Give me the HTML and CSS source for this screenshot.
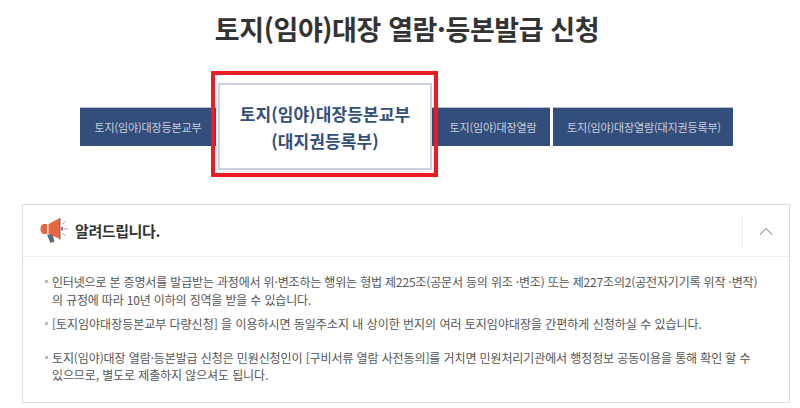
FILE: index.html
```html
<!DOCTYPE html>
<html lang="ko">
<head>
    <meta charset="UTF-8">
    <title>토지(임야)대장 열람·등본발급 신청</title>
    <link rel="stylesheet" href="styles.css">
</head>
<body>
    <h1 class="page-title">토지(임야)대장 열람·등본발급 신청</h1>

    <div class="tabs">
        <div class="tab tab-first">토지(임야)대장등본교부</div>
        <div class="tab tab-active">
            토지(임야)대장등본교부<br>(대지권등록부)
            <div class="tab-mark"></div>
        </div>
        <div class="tab tab-third">토지(임야)대장열람</div>
        <div class="tab tab-fourth">토지(임야)대장열람(대지권등록부)</div>
    </div>

    <div class="notice">
        <div class="notice-head">
            <svg class="notice-icon" width="28" height="26" viewBox="0 0 28 26">
                <path d="M4 6h3v10H4C2 16 .5 14 .5 11S2 6 4 6z" fill="#e8663f"/>
                <path d="M8.500 6L19 .5V20.500L8.500 16z" fill="#e8663f"/>
                <path d="M19 0h1.500v21.500H19z" fill="#6b7887"/>
                <path d="M7 16.500h5.500l2 7-4 1.500z" fill="#59687a"/>
                <path d="M21 9h2v3.500h-2z" fill="#d9534f"/>
                <path d="M24 10.800h4M22.500 6l3-2.500M22.500 15.500l3 2.500" stroke="#b9c0c8" stroke-width="1.200" fill="none"/>
            </svg>
            <div class="notice-title">알려드립니다.</div>
            <div class="notice-toggle">
                <svg width="14" height="8" viewBox="0 0 14 8"><path d="M1 7.500L7 1.500l6 6" stroke="#9aa7b5" stroke-width="1.200" fill="none"/></svg>
            </div>
        </div>
        <ul class="notice-list">
            <li>인터넷으로 본 증명서를 발급받는 과정에서 위·변조하는 행위는 형법 제225조(공문서 등의 위조 ·변조) 또는 제227조의2(공전자기기록 위작 ·변작)<br>의 규정에 따라 10년 이하의 징역을 받을 수 있습니다.</li>
            <li class="item-wide">[토지임야대장등본교부 다량신청] 을 이용하시면 동일주소지 내 상이한 번지의 여러 토지임야대장을 간편하게 신청하실 수 있습니다.</li>
            <li class="item-gap">토지(임야)대장 열람·등본발급 신청은 민원신청인이 [구비서류 열람 사전동의]를 거치면 민원처리기관에서 행정정보 공동이용을 통해 확인 할 수<br>있으므로, 별도로 제출하지 않으셔도 됩니다.</li>
        </ul>
    </div>
</body>
</html>
```

FILE: styles.css
```css
* { margin: 0; padding: 0; box-sizing: border-box; }
body {
    font-family: "Noto Sans CJK KR", "Noto Sans", sans-serif;
    background: white;
    color: #555;
    width: 800px;
    height: 408px;
    overflow: hidden;
}
.page-title {
    font-size: 27px;
    font-weight: bold;
    color: #333;
    text-align: center;
    line-height: 38px;
    padding-top: 10px;
    padding-left: 14px;
    letter-spacing: -0.4px;
}
.tabs {
    display: flex;
    align-items: center;
    height: 87px;
    margin-top: 35px;
    padding-left: 80px;
}
.tab {
    height: 39px;
    background: #344e7c;
    border-top: 1px solid #b5bfd0;
    color: #c9d0dc;
    font-size: 11px;
    display: flex;
    align-items: center;
    justify-content: center;
    letter-spacing: -0.15px;
}
.tab-first { width: 136px; margin-right: 2px; }
.tab-third { width: 118px; padding-left: 4px; }
.tab-fourth { width: 180px; margin-left: 3px; padding-left: 2px; }
.tab-active {
    display: block;
    width: 214px;
    height: 87px;
    background: white;
    border: 2px solid #ccd2e0;
    color: #344e7c;
    font-size: 17px;
    font-weight: bold;
    line-height: 27px;
    padding-top: 15px;
    text-align: center;
    position: relative;
    box-shadow: 0 4px 12px rgba(0,0,0,0.08);
    letter-spacing: 0.1px;
    z-index: 1;
}
.tab-mark {
    position: absolute;
    top: -14px;
    left: -9px;
    right: -8px;
    bottom: -9px;
    border: 4px solid #ec1c24;
}
.notice {
    margin: 34px 10px 0 22px;
    height: 199px;
    border: 1px solid #ddd;
}
.notice-head {
    display: flex;
    align-items: center;
    height: 52px;
    padding-left: 17px;
    border-bottom: 1px solid #eee;
}
.notice-icon { margin-right: 7px; }
.notice-title {
    font-size: 15px;
    font-weight: bold;
    color: #333;
    flex: 1;
    letter-spacing: -0.4px;
}
.notice-toggle {
    width: 47px;
    height: 34px;
    border-left: 1px solid #eee;
    display: flex;
    align-items: center;
    justify-content: center;
}
.notice-list {
    list-style: none;
    padding: 16px 0 0 29px;
    font-size: 12px;
    line-height: 17.500px;
    letter-spacing: -0.17px;
}
.notice-list li {
    position: relative;
    margin-bottom: 7px;
}
.notice-list li::before {
    content: '';
    position: absolute;
    left: -7px;
    top: 7px;
    width: 3px;
    height: 3px;
    background: #bbb;
}
.notice-list .item-wide { letter-spacing: -0.02px; }
.notice-list .item-gap { margin-top: 16px; letter-spacing: -0.11px; }
```
